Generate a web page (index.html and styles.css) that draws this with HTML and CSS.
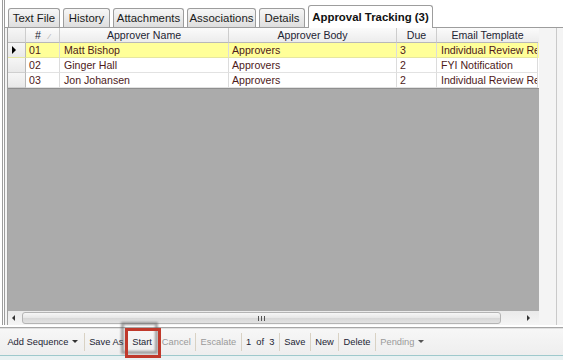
FILE: index.html
```html
<!DOCTYPE html>
<html>
<head>
<meta charset="utf-8">
<link rel="stylesheet" href="styles.css">
</head>
<body>
<div class="screen">
  <div class="frame">
    <div class="tabs">
      <div class="tab t1">Text File</div>
      <div class="tab t2">History</div>
      <div class="tab t3">Attachments</div>
      <div class="tab t4">Associations</div>
      <div class="tab t5">Details</div>
      <div class="tab active">Approval Tracking (3)</div>
    </div>
    <div class="panel">
      <div class="gridwrap">
        <div class="grid">
          <div class="row head">
            <div class="c rh"></div>
            <div class="c num">#<span class="sort">&#8260;</span></div>
            <div class="c name">Approver Name</div>
            <div class="c body">Approver Body</div>
            <div class="c due">Due</div>
            <div class="c tpl">Email Template</div>
          </div>
          <div class="row sel">
            <div class="c rh"><span class="cur"></span></div>
            <div class="c num">01</div>
            <div class="c name">Matt Bishop</div>
            <div class="c body">Approvers</div>
            <div class="c due">3</div>
            <div class="c tpl">Individual Review Request</div>
          </div>
          <div class="row">
            <div class="c rh"></div>
            <div class="c num">02</div>
            <div class="c name">Ginger Hall</div>
            <div class="c body">Approvers</div>
            <div class="c due">2</div>
            <div class="c tpl">FYI Notification</div>
          </div>
          <div class="row">
            <div class="c rh"></div>
            <div class="c num">03</div>
            <div class="c name">Jon Johansen</div>
            <div class="c body">Approvers</div>
            <div class="c due">2</div>
            <div class="c tpl">Individual Review Request</div>
          </div>
          <div class="empty"></div>
          <div class="hscroll">
            <span class="arrow left"></span>
            <div class="thumb"><span class="grip"></span></div>
            <span class="arrow right"></span>
          </div>
        </div>
        <div class="side"></div>
      </div>
    </div>
  </div>
  <div class="toolbar">
    <span class="item">Add Sequence <span class="dd"></span></span>
    <span class="sep"></span>
    <span class="item">Save As</span>
    <span class="item start">Start</span>
    <span class="item off cancel">Cancel</span>
    <span class="sep"></span>
    <span class="item off">Escalate</span>
    <span class="sep"></span>
    <span class="item">1 &nbsp;of &nbsp;3</span>
    <span class="sep"></span>
    <span class="item">Save</span>
    <span class="sep"></span>
    <span class="item">New</span>
    <span class="sep"></span>
    <span class="item">Delete</span>
    <span class="sep"></span>
    <span class="item off">Pending <span class="dd"></span></span>
  </div>
  <div class="bottomline"></div>
  <div class="hoverbox"></div>
  <div class="redbox"></div>
</div>
</body>
</html>
```
FILE: styles.css
```css
html, body {
  margin: 0;
  padding: 0;
  background: #ffffff;
}
.screen {
  position: relative;
  width: 563px;
  height: 360px;
  overflow: hidden;
  font-family: "Liberation Sans", Arial, sans-serif;
  display: flex;
  flex-direction: column;
  background: #ffffff;
}
.frame {
  margin-left: 2px;
  border-left: 3px double #9c9c9c;
  height: 325px;
  display: flex;
  flex-direction: column;
  box-sizing: border-box;
}
.tabs {
  height: 27px;
  display: flex;
  align-items: flex-end;
  gap: 3px;
  padding-left: 3px;
  box-sizing: border-box;
  position: relative;
  z-index: 2;
}
.tab {
  height: 19px;
  box-sizing: border-box;
  border: 1px solid #9d9d9d;
  border-bottom: none;
  border-radius: 3px 3px 0 0;
  background: linear-gradient(#f7f7f7, #dedede);
  font-size: 11.4px;
  line-height: 18px;
  color: #1b1b1b;
  white-space: nowrap;
  text-align: center;
}
.t1 { width: 52px; }
.t2 { width: 47px; }
.t3 { width: 71px; }
.t4 { width: 69px; }
.t5 { width: 46px; }
.tab.active {
  width: 125px;
  height: 23px;
  margin-bottom: -1px;
  background: #ffffff;
  font-weight: bold;
  font-size: 11.4px;
  padding-top: 2px;
  line-height: 18px;
  color: #111;
}
.panel {
  flex: 1;
  border-top: 1px solid #9d9d9d;
  background: #f4f4f4;
  padding-left: 2px;
  display: flex;
  flex-direction: column;
}
.gridwrap {
  flex: 1;
  display: flex;
}
.grid {
  width: 531px;
  border-left: 1px solid #a0a0a0;
  display: flex;
  flex-direction: column;
  overflow: hidden;
  font-size: 10.6px;
}
.side {
  width: 17px;
  border-right: 1px solid #c9c9c9;
  background: #f4f4f4;
}
.row {
  display: flex;
  height: 15px;
  flex: none;
  background: #ffffff;
  color: #4e1a1a;
}
.row .c {
  box-sizing: border-box;
  height: 15px;
  line-height: 14px;
  border-right: 1px solid #dcdcdc;
  border-bottom: 1px solid #e2e2e2;
  padding-left: 3px;
  white-space: nowrap;
  overflow: hidden;
  flex: none;
}
.row .rh {
  width: 18px;
  background: linear-gradient(#f6f6f6, #e9e9e9);
  border-right: 1px solid #b9b9b9;
  border-bottom: 1px solid #cfcfcf;
  padding: 0;
  position: relative;
}
.num { width: 34px; }
.name { width: 169px; padding-left: 4px !important; }
.body { width: 168px; }
.due { width: 40px; }
.tpl { width: 101px; padding-left: 4px !important; text-overflow: clip; }

.row.head {
  background: linear-gradient(#fbfbfb, #ebebeb);
  color: #1d2433;
}
.row.head .c {
  text-align: center;
  padding-left: 0 !important;
  border-right: 1px solid #cdcdcd;
  border-bottom: 1px solid #b8b8b8;
}
.row.head .tpl {
  border-right: none;
}
.sort {
  color: #a8a8a8;
  font-size: 8px;
  margin-left: 8px;
}
.row.sel { background: #ffff99; }
.row.sel .c { border-bottom-color: #e6e6a0; }
.cur {
  position: absolute;
  left: 4px;
  top: 3px;
  width: 0;
  height: 0;
  border-left: 4px solid #000;
  border-top: 4px solid transparent;
  border-bottom: 4px solid transparent;
}
.empty {
  flex: 1;
  background: #ababab;
  border-top: 1px solid #8f8f8f;
}
.hscroll {
  height: 14px;
  flex: none;
  background: linear-gradient(#eaeaea, #f5f5f5);
  display: flex;
  align-items: center;
  position: relative;
}
.arrow {
  width: 14px;
  height: 14px;
  position: relative;
  flex: none;
}
.arrow::after {
  content: "";
  position: absolute;
  top: 4px;
  width: 0;
  height: 0;
  border-top: 3px solid transparent;
  border-bottom: 3px solid transparent;
}
.arrow.left::after { left: 4px; border-right: 3px solid #333; }
.arrow.right { margin-left: auto; margin-right: 4px; }
.arrow.right::after { left: 6px; border-left: 3px solid #333; }
.thumb {
  width: 479px;
  height: 12px;
  box-sizing: border-box;
  border: 1px solid #b4b4b4;
  border-radius: 3px;
  background: linear-gradient(#f7f7f7, #e6e6e6 50%, #d7d7d7 51%, #e2e2e2);
  display: flex;
  align-items: center;
  justify-content: center;
}
.grip {
  width: 5px;
  height: 5px;
  border-left: 1px solid #555;
  border-right: 1px solid #555;
  position: relative;
}
.grip::after {
  content: "";
  position: absolute;
  left: 2px;
  top: 0;
  width: 1px;
  height: 5px;
  background: #555;
}
.toolbar {
  margin-top: 2px;
  height: 28px;
  box-sizing: border-box;
  border-top: 1px solid #a6a6a6;
  background: linear-gradient(#f7f7f7, #eeeeee);
  display: flex;
  align-items: center;
  padding-left: 3px;
  font-size: 9.3px;
  color: #1c2433;
  box-shadow: inset 0 1px 0 #e0e0e0;
}
.item {
  padding: 0 4.4px;
  white-space: nowrap;
  display: flex;
  align-items: center;
}
.item.start { padding: 0 6px 0 4.5px; }
.item.cancel { padding-left: 4px; }
.item.off { color: #9a9a9a; }
.sep {
  width: 1px;
  height: 18px;
  background: #d9d2c4;
}
.dd {
  display: inline-block;
  width: 0;
  height: 0;
  margin-left: 4px;
  margin-right: 1px;
  border-left: 3px solid transparent;
  border-right: 3px solid transparent;
  border-top: 3px solid #333;
}
.item.off .dd { border-top-color: #555; }
.bottomline {
  flex: 1;
  border-top: 1px solid #9ec9cc;
  background: #e9f1f2;
}
.hoverbox {
  position: absolute;
  left: 121px;
  top: 322px;
  width: 37px;
  height: 32px;
  box-sizing: border-box;
  border: 3px solid rgba(90, 90, 90, 0.55);
  filter: blur(1px);
}
.redbox {
  position: absolute;
  left: 125px;
  top: 328px;
  width: 36px;
  height: 30px;
  box-sizing: border-box;
  border: 3px solid #c0392b;
}
```
